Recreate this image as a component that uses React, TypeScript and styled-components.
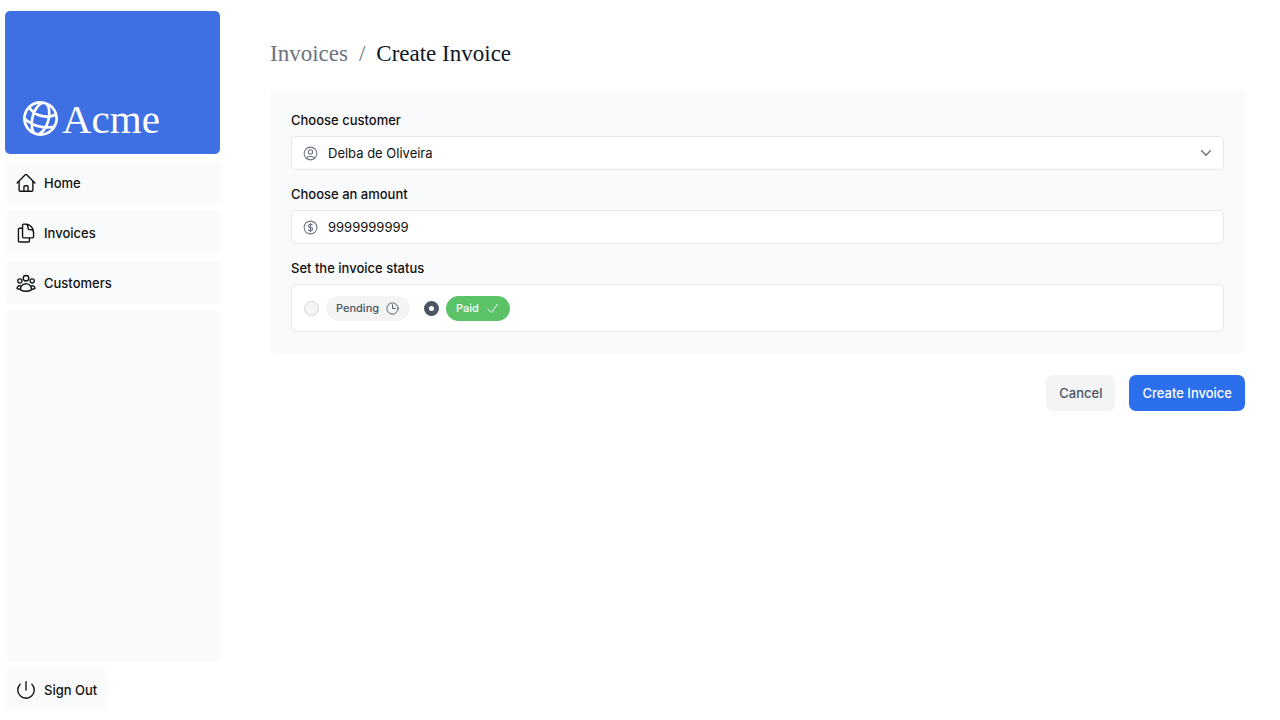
import React, { useState } from "react";
import styled, { createGlobalStyle, css } from "styled-components";
import {
  HiOutlineCheck,
  HiOutlineChevronDown,
  HiOutlineClock,
  HiOutlineCurrencyDollar,
  HiOutlineDocumentDuplicate,
  HiOutlineGlobeAlt,
  HiOutlineHome,
  HiOutlinePower,
  HiOutlineUserCircle,
  HiOutlineUserGroup,
} from "react-icons/hi2";

const GlobalStyle = createGlobalStyle`
  *, *::before, *::after { box-sizing: border-box; }
  body {
    margin: 0;
    background: #fff;
    color: #111;
    font-family: Inter, "Liberation Sans", sans-serif;
    font-size: 13px;
    line-height: 16px;
  }
  button, input, select { font: inherit; color: inherit; }
`;

const serif = css`
  font-family: "Liberation Serif", serif;
  font-weight: 400;
`;

const Page = styled.div`
  display: flex;
  min-height: 100vh;
`;

const Sidebar = styled.aside`
  display: flex;
  flex-direction: column;
  flex: none;
  gap: 7px;
  width: 220px;
  padding: 11px 0 9px 5px;
`;

const LogoLink = styled.a`
  ${serif}
  display: flex;
  align-items: center;
  height: 143px;
  padding: 72px 14px 0;
  border-radius: 5px;
  background: #3f70e3;
  color: #fff;
  font-size: 41px;
  line-height: 44px;
  text-decoration: none;
`;

const Globe = styled(HiOutlineGlobeAlt)`
  width: 43px;
  height: 43px;
  flex: none;
  transform: rotate(15deg);
`;

const Nav = styled.nav`
  display: flex;
  flex-direction: column;
  flex: 1;
  gap: 7px;
`;

const navItem = css`
  display: flex;
  align-items: center;
  gap: 7px;
  height: 43px;
  padding: 0 10px;
  border: 0;
  border-radius: 5px;
  background: #f9fafb;
  color: #111;
  font-weight: 500;
  text-decoration: none;
  cursor: pointer;
  svg { width: 22px; height: 22px; }
`;

const NavLink = styled.a`
  ${navItem}
`;

const NavFiller = styled.div`
  flex: 1;
  border-radius: 5px;
  background: #f9fafb;
`;

const SignOut = styled.button`
  ${navItem}
  align-self: flex-start;
`;

const Main = styled.main`
  flex: 1;
  min-width: 0;
  padding: 40px 35px 40px 50px;
`;

const Breadcrumbs = styled.nav`
  ${serif}
  display: flex;
  gap: 11px;
  margin-bottom: 22px;
  color: #6b7280;
  font-size: 23px;
  line-height: 28px;
`;

const Crumb = styled.a<{ $active?: boolean }>`
  color: ${(p) => (p.$active ? "#111827" : "inherit")};
  text-decoration: none;
`;

const Card = styled.div`
  display: flex;
  flex-direction: column;
  gap: 16px;
  padding: 22px 21px 21px;
  border-radius: 5px;
  background: #f9fafb;
`;

const Group = styled.div`
  display: flex;
  flex-direction: column;
  gap: 8px;
`;

const Label = styled.label`
  font-weight: 500;
`;

const Field = styled.div`
  display: grid;
  grid-template-columns: 36px 1fr 34px;
  align-items: center;
  height: 34px;
  border: 1px solid #e5e7eb;
  border-radius: 5px;
  background: #fff;
  color: #6b7280;
  > * { grid-row: 1; }
  > svg { width: 17px; height: 17px; justify-self: center; pointer-events: none; }
  > svg:first-child { grid-column: 1; }
  > svg:last-child { grid-column: 3; width: 14px; height: 14px; stroke-width: 2.5; }
`;

const control = css`
  grid-column: 1 / -1;
  width: 100%;
  height: 32px;
  padding: 0 36px;
  border: 0;
  border-radius: 4px;
  background: transparent;
  color: #111;
  appearance: none;
`;

const Select = styled.select`
  ${control}
`;

const Input = styled.input`
  ${control}
`;

const StatusBox = styled.div`
  display: flex;
  align-items: center;
  gap: 14px;
  height: 48px;
  padding: 0 12px;
  border: 1px solid #e5e7eb;
  border-radius: 5px;
  background: #fff;
`;

const Choice = styled.div`
  display: flex;
  align-items: center;
  gap: 7px;
`;

const Radio = styled.input`
  appearance: none;
  width: 15px;
  height: 15px;
  margin: 0;
  border: 1px solid #d1d5db;
  border-radius: 50%;
  background: #f3f4f6;
  &:checked {
    border: 5px solid #4b5563;
    background: #fff;
  }
`;

const Pill = styled.label<{ $paid?: boolean }>`
  display: flex;
  align-items: center;
  gap: 6px;
  height: 25px;
  padding: 0 10px;
  border-radius: 13px;
  background: ${(p) => (p.$paid ? "#5cc268" : "#f3f4f6")};
  color: ${(p) => (p.$paid ? "#fff" : "#4b5563")};
  font-size: 11px;
  font-weight: 500;
  svg { width: 15px; height: 15px; }
`;

const Actions = styled.div`
  display: flex;
  justify-content: flex-end;
  gap: 14px;
  margin-top: 22px;
`;

const action = css`
  display: flex;
  align-items: center;
  height: 36px;
  padding: 0 13px;
  border: 0;
  border-radius: 7px;
  font-weight: 500;
  text-decoration: none;
  cursor: pointer;
`;

const Cancel = styled.a`
  ${action}
  background: #f3f4f6;
  color: #4b5563;
`;

const Submit = styled.button`
  ${action}
  background: #2b6fed;
  color: #fff;
`;

export default function App() {
  const [amount, setAmount] = useState("9999999999");
  const [status, setStatus] = useState("paid");

  return (
    <Page>
      <GlobalStyle />
      <Sidebar>
        <LogoLink href="#">
          <Globe />
          <span>Acme</span>
        </LogoLink>
        <Nav>
          <NavLink href="#home"><HiOutlineHome />Home</NavLink>
          <NavLink href="#invoices"><HiOutlineDocumentDuplicate />Invoices</NavLink>
          <NavLink href="#customers"><HiOutlineUserGroup />Customers</NavLink>
          <NavFiller />
          <SignOut type="button"><HiOutlinePower />Sign Out</SignOut>
        </Nav>
      </Sidebar>
      <Main>
        <Breadcrumbs>
          <Crumb href="#invoices">Invoices</Crumb>
          <span>/</span>
          <Crumb href="#create" $active>Create Invoice</Crumb>
        </Breadcrumbs>
        <form onSubmit={(e) => e.preventDefault()}>
          <Card>
            <Group>
              <Label htmlFor="customer">Choose customer</Label>
              <Field>
                <HiOutlineUserCircle />
                <Select id="customer">
                  <option>Delba de Oliveira</option>
                </Select>
                <HiOutlineChevronDown />
              </Field>
            </Group>
            <Group>
              <Label htmlFor="amount">Choose an amount</Label>
              <Field>
                <HiOutlineCurrencyDollar />
                <Input id="amount" value={amount} onChange={(e) => setAmount(e.target.value)} />
              </Field>
            </Group>
            <Group role="radiogroup" aria-labelledby="status-label">
              <Label as="span" id="status-label">Set the invoice status</Label>
              <StatusBox>
                <Choice>
                  <Radio
                    type="radio"
                    id="pending"
                    name="status"
                    checked={status === "pending"}
                    onChange={() => setStatus("pending")}
                  />
                  <Pill htmlFor="pending">Pending<HiOutlineClock /></Pill>
                </Choice>
                <Choice>
                  <Radio
                    type="radio"
                    id="paid"
                    name="status"
                    checked={status === "paid"}
                    onChange={() => setStatus("paid")}
                  />
                  <Pill htmlFor="paid" $paid>Paid<HiOutlineCheck /></Pill>
                </Choice>
              </StatusBox>
            </Group>
          </Card>
          <Actions>
            <Cancel href="#invoices">Cancel</Cancel>
            <Submit type="submit">Create Invoice</Submit>
          </Actions>
        </form>
      </Main>
    </Page>
  );
}
